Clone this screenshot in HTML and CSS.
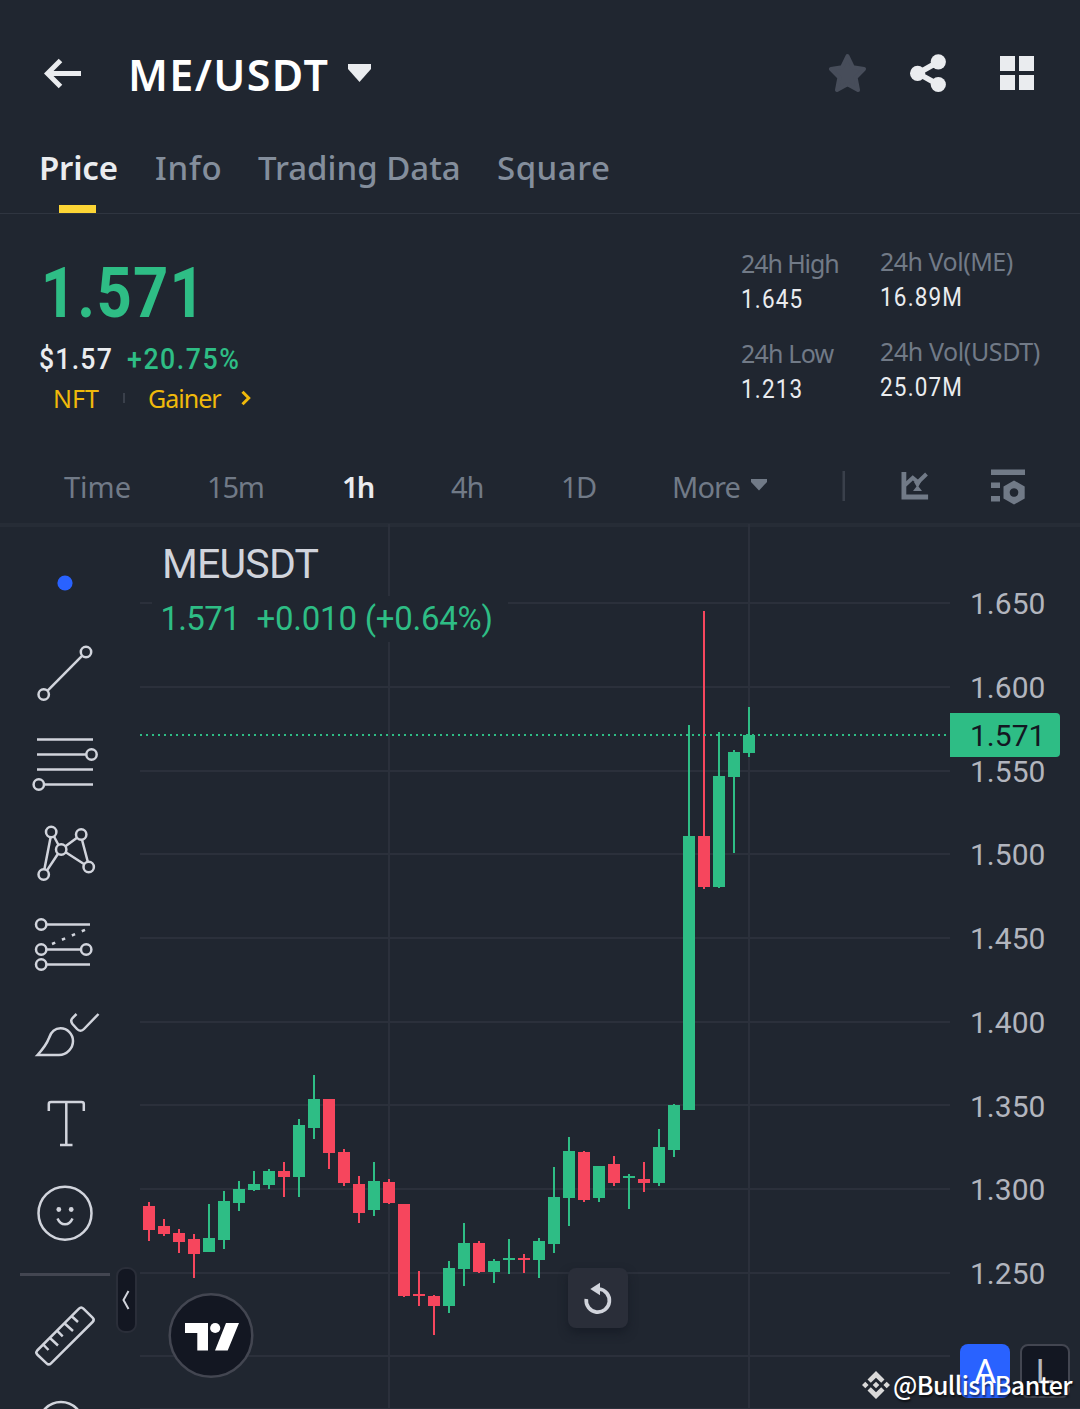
FILE: index.html
```html
<!DOCTYPE html>
<html lang="en">
<head>
<meta charset="utf-8">
<title>ME/USDT</title>
<link rel="stylesheet" href="styles.css">
</head>
<body>
<header class="topbar">
  <svg class="back" width="38" height="32" viewBox="44 58 38 32"><path d="M81 73.5H48M60.500 60.500L47.500 73.500L60.500 86.500" fill="none" stroke="#eaecef" stroke-width="5"/></svg>
  <h1 class="pair">ME/USDT</h1>
  <svg class="pair-caret" width="24" height="20" viewBox="347 63 24 20"><path d="M348 64H371V69L359.500 82L348 69Z" fill="#eaecef"/></svg>
  <div class="actions">
    <svg width="38" height="40" viewBox="828 54 38 40"><path d="M847.500 57L852.800 68.200L864 70L855.600 78.500L858 91L847.500 85.300L837 91L839.400 78.500L831 70L842.200 68.200Z" fill="#474d5a" stroke="#474d5a" stroke-width="4" stroke-linejoin="round"/></svg>
    <svg width="38" height="40" viewBox="909 53 38 40"><path d="M938 62L918 73.300L938 84.500" fill="none" stroke="#eaecef" stroke-width="5.500"/><g fill="#eaecef"><circle cx="938.300" cy="61.800" r="7.600"/><circle cx="917.600" cy="73.300" r="7.600"/><circle cx="938.300" cy="84.500" r="7.600"/></g></svg>
    <svg width="36" height="36" viewBox="999 55 36 36"><path d="M1000 56h15v15h-15zM1019 56h15v15h-15zM1000 75h15v15h-15zM1019 75h15v15h-15z" fill="#eaecef"/></svg>
  </div>
</header>

<nav class="tabs">
  <a class="tab tab-price active">Price</a>
  <a class="tab tab-info">Info</a>
  <a class="tab tab-trading">Trading Data</a>
  <a class="tab tab-square">Square</a>
</nav>

<section class="summary">
  <div class="quote">
    <div class="last">1.571</div>
    <div class="change"><span class="usd">$1.57</span><span class="pct">+20.75%</span></div>
    <div class="tags"><span class="nft">NFT</span><i class="tag-sep"></i><span class="gainer">Gainer</span><svg width="10" height="16" viewBox="0 0 10 16"><path d="M1.500 1.800L7.700 8L1.500 14.200" fill="none" stroke="#f0b90b" stroke-width="3"/></svg></div>
  </div>
  <dl class="stats stats-price">
    <dt class="s-high">24h High</dt><dd>1.645</dd>
    <dt class="s-low">24h Low</dt><dd>1.213</dd>
  </dl>
  <dl class="stats stats-vol">
    <dt class="s-me">24h Vol(ME)</dt><dd>16.89M</dd>
    <dt class="s-usdt">24h Vol(USDT)</dt><dd>25.07M</dd>
  </dl>
</section>

<nav class="intervals">
  <a class="iv iv-time">Time</a>
  <a class="iv iv-15">15m</a>
  <a class="iv iv-1h active">1h</a>
  <a class="iv iv-4h">4h</a>
  <a class="iv iv-1d">1D</a>
  <a class="iv iv-more">More</a>
  <svg width="330" height="46" viewBox="750 464 330 46"><g fill="#717a87">
    <path d="M751 479H767V482L759 490.500L751 482Z"/>
    <path d="M842.500 471h2.500v30h-2.500z" fill="#3a404b"/>
    <path d="M901.500 472h4.800v22.500h21.800v5h-26.600z"/>
    <path d="M905 485L912.800 477.800L918 482.200L926.500 474" fill="none" stroke="#717a87" stroke-width="4"/>
    <path d="M914 482h7l-2.500 4.500l3.500 4.500h-9l3.500-4.500z"/>
    <path d="M991 469.500h34v5.500h-34zM991 482.500h9v5.500h-9zM991 496h9v5.500h-9z"/>
    <path fill-rule="evenodd" d="M1014 480.500L1024.700 486.500V498.500L1014 504.500L1003.500 498.500V486.500ZM1014 488.200a4.300 4.300 0 1 0 .010 0Z"/>
  </g></svg>
</nav>

<main class="workspace">
  <aside class="tools">
    <svg viewBox="0 538 130 90"><circle cx="65" cy="583" r="7.600" fill="#2962ff"/></svg>
    <svg viewBox="0 628 130 90"><circle cx="86" cy="652" r="5.200"/><circle cx="43.700" cy="694.500" r="5.200"/><path d="M82.300 655.700L47.400 690.800"/></svg>
    <svg viewBox="0 718 130 90"><path d="M37 739.500h56M37 754.500h49M37 769.500h56M44 784.500h49"/><circle cx="91.500" cy="754.500" r="5.200"/><circle cx="38.800" cy="784.500" r="5.200"/></svg>
    <svg viewBox="0 808 130 90"><circle cx="51.200" cy="832" r="5.200"/><circle cx="81.200" cy="834.500" r="5.200"/><circle cx="61.200" cy="849.500" r="5.200"/><circle cx="43.700" cy="874.500" r="5.200"/><circle cx="88.700" cy="867" r="5.200"/><path d="M50.600 837.200L44.400 869.300M54 836.500L58.500 845M65.500 846.300L77 837.700M82 839.700L87.800 861.800M65.700 852.200L84.300 864.200M58 853.700L47 870.400"/></svg>
    <svg viewBox="0 898 130 90"><circle cx="41.200" cy="924.500" r="5.200"/><circle cx="41.200" cy="949.500" r="5.200"/><circle cx="86.200" cy="949.500" r="5.200"/><circle cx="41.200" cy="964.500" r="5.200"/><path d="M46.400 924.500H90M46.400 949.500H81M46.400 964.500H90"/><path d="M52 944L87 929" stroke-dasharray="3.500 7.300"/></svg>
    <svg viewBox="0 988 130 90"><path d="M37.500 1055H59C67 1055 73 1048 73 1041C73 1034 67.500 1028.300 60.500 1028.300C54.500 1028.300 51 1032 49 1038C46.500 1044.500 43 1049 37.500 1055ZM76.500 1014L72.500 1018C71 1019.600 71 1022 72.500 1024L77 1029C79 1031.200 82 1031.200 84 1029L98.500 1014"/></svg>
    <svg viewBox="0 1078 130 90"><path d="M48.800 1111V1104Q48.800 1102 51 1102H81.500Q83.800 1102 83.800 1104V1111M66.300 1102V1145M60 1145H72.500"/></svg>
    <svg viewBox="0 1168 130 90"><circle cx="65" cy="1213.200" r="26.500"/><circle cx="58.800" cy="1209.500" r="2.400" class="solid"/><circle cx="71.200" cy="1209.500" r="2.400" class="solid"/><path d="M57.500 1218.500Q60 1224.300 65 1224.300Q70 1224.300 72.500 1218.500"/></svg>
    <hr>
    <svg viewBox="0 1291 130 90"><path d="M37.200 1350.500L79 1308.600Q81.200 1306.400 83.400 1308.600L92.600 1317.600Q94.800 1319.800 92.600 1322L51 1363.300Q48.800 1365.500 46.600 1363.300L37.200 1354.500Q35.400 1352.500 37.200 1350.500ZM43.700 1345L48.500 1350M50.500 1338.500L58 1345.500M57.500 1331.200L62.700 1336.300M65 1323.800L73 1331M72 1316.500L78 1322"/></svg>
    <svg viewBox="0 1381 130 28" class="cut"><circle cx="61" cy="1424" r="22"/></svg>
  </aside>

  <svg class="chart" width="940" height="885" viewBox="140 524 940 885">
    <g fill="#2b303b">
      <path d="M140 602h810v2H140zM140 686h810v2H140zM140 770h810v2H140zM140 853h810v2H140zM140 937h810v2H140zM140 1021h810v2H140zM140 1104h810v2H140zM140 1188h810v2H140zM140 1272h810v2H140zM140 1355h810v2H140z"/>
      <path d="M388 524h2v885h-2zM748 524h2v885h-2zM140 1408h940v1H140z"/>
    </g>
    <g id="candles"></g>
    <path d="M140 735H950" stroke="#2ebd85" stroke-width="2" stroke-dasharray="2 4"/>
    <g class="legend">
      <rect x="152" y="540" width="180" height="50"/>
      <rect x="152" y="596" width="356" height="46"/>
      <text x="162" y="578" font-size="41" textLength="157" fill="#d1d4dc">MEUSDT</text>
      <text x="160.500" y="630" font-size="33" textLength="80">1.571</text>
      <text x="256.500" y="630" font-size="33" textLength="236.500">+0.010 (+0.64%)</text>
    </g>
    <g class="axis">
      <text x="970" y="614">1.650</text><text x="970" y="698">1.600</text><text x="970" y="782">1.550</text>
      <text x="970" y="865">1.500</text><text x="970" y="949">1.450</text><text x="970" y="1033">1.400</text>
      <text x="970" y="1117">1.350</text><text x="970" y="1200">1.300</text><text x="970" y="1284">1.250</text>
      <path d="M950 713h106a4 4 0 0 1 4 4v36a4 4 0 0 1-4 4H950z" fill="#2ebd85"/>
      <text x="970" y="746" class="now">1.571</text>
    </g>
    <circle cx="211" cy="1335.500" r="41.300" fill="#131722" stroke="#434651" stroke-width="2.500"/>
    <g fill="#fff"><path d="M185 1323h23v27.500h-10.700V1333H185zM226 1323h13l-11.300 27.500H215z"/><circle cx="215.200" cy="1328" r="5.100"/></g>
  </svg>

  <button class="collapse" aria-label="Collapse"><svg width="8" height="20" viewBox="0 0 8 20"><path d="M6.500 1L1.500 10L6.500 19" fill="none" stroke="#d1d4dc" stroke-width="2"/></svg></button>
  <button class="reset" aria-label="Reset"><svg width="30" height="34" viewBox="583 1282 30 34"><path d="M586.300 1300A11.600 11.600 0 1 0 599 1290" fill="none" stroke="#d1d4dc" stroke-width="3.700"/><path d="M590.300 1290L600 1283.800V1296.200Z" fill="#d1d4dc"/></svg></button>
  <div class="scale"><span class="auto">A</span><span class="log">L</span></div>
  <div class="credit">
    <svg width="28" height="28" viewBox="-14 -14 28 28"><g fill="#d9d9d9"><path d="M0-14L8.500-5.500L5.200-2.200L0-7.300L-5.200-2.200L-8.500-5.500ZM0 14L8.500 5.500L5.200 2.200L0 7.300L-5.200 2.200L-8.500 5.500ZM0-3.300L3.300 0L0 3.300L-3.300 0ZM-10.700-3.300L-7.400 0L-10.700 3.300L-14 0ZM10.700-3.300L14 0L10.700 3.300L7.400 0Z"/></g></svg>
    <span>@BullishBanter</span>
  </div>
</main>
<script src="chart.js"></script>
</body>
</html>
```
FILE: styles.css
```css
* { box-sizing: border-box; }
body {
  margin: 0;
  width: 1080px;
  height: 1409px;
  overflow: hidden;
  background: #202630;
  color: #eaecef;
  font-family: "Noto Sans", "Open Sans", sans-serif;
}
svg { display: block; flex: none; }
button { padding: 0; }

.topbar { display: flex; align-items: center; height: 147px; padding: 0 45px 1px 44px; }
.back { margin-top: 2px; }
.pair { margin: 3px 0 0 46px; width: 202px; font-size: 43px; line-height: 60px; font-weight: 600; letter-spacing: 1.4px; color: #fff; white-space: nowrap; }
.pair-caret { margin-left: 17px; }
.actions { display: flex; align-items: center; margin-left: auto; gap: 43px; }
.actions svg:last-child { margin-left: 9px; }

.tabs { display: flex; height: 67px; padding-left: 39px; border-bottom: 1px solid #2f3540; font-size: 33px; line-height: 42px; font-weight: 500; color: #848e9c; white-space: nowrap; }
.tab { position: relative; }
.tab-price { width: 116px; letter-spacing: -.2px; }
.tab-info { width: 103px; letter-spacing: .8px; }
.tab-trading { width: 239px; }
.tab-square { letter-spacing: .5px; }
.tab.active { color: #eaecef; font-weight: 600; }
.tab.active::after { content: ""; position: absolute; left: 20px; top: 58px; width: 37px; height: 8px; background: #fcd535; }

.summary { display: flex; height: 238px; white-space: nowrap; }
.quote { flex: none; width: 741px; padding: 36px 0 0 39px; }
.last { padding-left: 2px; font: 700 70px/86px Roboto, sans-serif; letter-spacing: 1.4px; color: #2ebd85; transform: scaleX(.88); transform-origin: left; }
.change { display: flex; font: 500 29px/36px Roboto, sans-serif; margin-top: 5px; }
.change span { transform: scaleX(.92); transform-origin: left; }
.usd { width: 88px; letter-spacing: 1.3px; }
.pct { letter-spacing: 1.7px; color: #2ebd85; }
.tags { display: flex; align-items: center; height: 36px; margin-top: 3px; padding-left: 14px; font-size: 25px; color: #f0b90b; }
.tag-sep { width: 2px; height: 10px; margin: 0 23px 0 24px; background: #3a404b; }
.nft { width: 46px; }
.gainer { width: 93px; letter-spacing: -1px; }
.stats { flex: none; margin: 0; font-size: 25px; }
.stats-price { width: 139px; padding-top: 31px; }
.stats-vol { padding-top: 29px; }
.stats dt { height: 37px; line-height: 36px; color: #717a87; }
.s-high { letter-spacing: -1.1px; }
.s-low { letter-spacing: -.8px; }
.s-me { letter-spacing: -.5px; }
.s-usdt { letter-spacing: -.4px; }
.stats dd { margin: 0 0 17px; font: 400 25px/36px Roboto, sans-serif; letter-spacing: 1.3px; transform: scaleX(.9); transform-origin: left; }

.intervals { display: flex; align-items: center; height: 75px; padding: 0 0 2px 64px; border-bottom: 4px solid #262c36; font-size: 29px; color: #717a87; white-space: nowrap; }
.iv.active { color: #eaecef; font-weight: 600; }
.iv-time { width: 143px; }
.iv-15 { width: 135px; letter-spacing: -1.2px; }
.iv-1h { width: 109px; letter-spacing: -1.8px; }
.iv-4h { width: 110px; letter-spacing: -1px; }
.iv-1d { width: 111px; letter-spacing: -1.5px; }
.iv-more { width: 78px; letter-spacing: -.9px; }

.workspace { position: relative; display: flex; height: 882px; }
.tools { display: flex; flex-direction: column; flex: none; width: 140px; padding-top: 11px; }
.tools svg { width: 130px; height: 90px; fill: none; stroke: #d1d4dc; stroke-width: 2.5; }
.tools svg:first-child { stroke: none; }
.tools .solid { fill: #d1d4dc; stroke: none; }
.tools .cut { height: 28px; }
.tools hr { width: 90px; height: 3px; margin: 15px 0 15px 20px; border: 0; background: #434651; }
.chart { margin-top: -3px; font-family: Roboto, sans-serif; }
.legend rect { fill: #202630; }
.legend text { fill: #2ebd85; }
.legend text:first-of-type { fill: #d1d4dc; }
.axis { font-size: 30px; fill: #b2b5be; }
.axis .now { fill: #131722; }
.up { fill: #2ebd85; }
.down { fill: #f6465d; }

.collapse { position: absolute; left: 116px; top: 740px; display: flex; align-items: center; justify-content: center; width: 21px; height: 66px; border: 2px solid #2a2e39; border-radius: 9px; background: #131722; }
.collapse svg { margin-right: 2px; }
.reset { position: absolute; left: 568px; top: 741px; display: flex; align-items: center; justify-content: center; width: 60px; height: 60px; border: 0; border-radius: 8px; background: #2a2e39; box-shadow: 0 5px 10px rgba(19, 23, 34, .6); }
.scale { position: absolute; left: 960px; top: 817px; display: flex; gap: 10px; font: 34px/54px Roboto, sans-serif; text-align: center; }
.scale span { width: 50px; height: 54px; border-radius: 8px; }
.auto { background: #2962ff; color: #fff; }
.log { border: 2px solid #434651; line-height: 50px; background: #131722; color: #b2b5be; }
.credit { position: absolute; left: 862px; top: 840px; display: flex; align-items: center; gap: 3px; height: 36px; font: 500 25px/36px "Noto Sans CJK SC", "Noto Sans", sans-serif; color: #fff; white-space: nowrap; text-shadow: 1px 2px 2px rgba(0, 0, 0, .6); }
.credit span { margin-top: -3px; letter-spacing: -.55px; }
```
FILE: chart.js
```js
// Each row: direction, high, body top, body bottom, low (chart pixels)
const candles = [
  ["down",1202,1206,1230,1241],["down",1219,1226,1234,1236],["down",1229,1233,1242,1253],["down",1234,1239,1254,1278],
  ["up",1204,1238,1252,1252],["up",1191,1201,1240,1249],["up",1181,1189,1203,1211],["up",1171,1184,1190,1191],
  ["up",1169,1171,1185,1189],["down",1162,1171,1177,1197],["up",1119,1125,1177,1197],["up",1075,1099,1128,1139],
  ["down",1099,1099,1153,1169],["down",1149,1152,1183,1186],["down",1176,1184,1213,1223],["up",1162,1181,1210,1216],
  ["down",1179,1182,1203,1204],["down",1204,1204,1296,1297],["down",1271,1294,1296,1306],["down",1295,1296,1306,1335],
  ["up",1261,1268,1306,1313],["up",1223,1243,1269,1286],["down",1241,1243,1272,1273],["up",1259,1261,1272,1283],
  ["up",1239,1258,1260,1274],["down",1254,1258,1260,1273],["up",1238,1241,1260,1278],["up",1167,1197,1244,1253],
  ["up",1137,1151,1198,1226],["down",1151,1152,1200,1202],["up",1166,1166,1198,1202],["down",1156,1164,1183,1186],
  ["up",1174,1176,1178,1209],["down",1162,1179,1183,1192],["up",1129,1147,1183,1186],["up",1104,1105,1150,1157],
  ["up",725,836,1110,1110],["down",611,836,887,889],["up",732,776,887,888],["up",750,752,777,853],["up",707,735,753,757]
];
const layer = document.getElementById("candles");
candles.forEach(([dir, high, top, bottom, low], i) => {
  const x = 149 + i * 15;
  const path = document.createElementNS("http://www.w3.org/2000/svg", "path");
  path.setAttribute("class", dir);
  path.setAttribute("d", `M${x - 1} ${high}h2V${low}h-2zM${x - 6} ${top}h12V${bottom}h-12z`);
  layer.appendChild(path);
});
```
